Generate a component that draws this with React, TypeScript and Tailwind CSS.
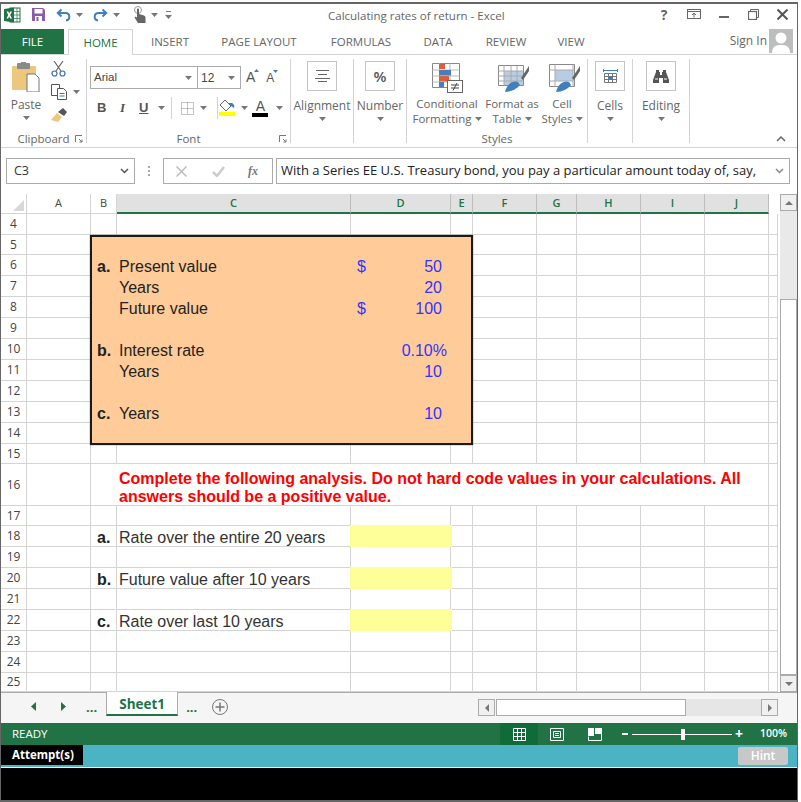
import type { ReactNode } from 'react';

const rowHeights = [21, 20, 21, 21, 21, 21, 21, 21, 21, 21, 21, 20, 42, 20, 21, 21, 21, 21, 21, 21, 21, 19];
const columns = ['A', 'B', 'C', 'D', 'E', 'F', 'G', 'H', 'I', 'J'];
const tabs = [
  { label: 'INSERT', width: 'w-[74px]' },
  { label: 'PAGE LAYOUT', width: 'w-[104px]' },
  { label: 'FORMULAS', width: 'w-[100px]' },
  { label: 'DATA', width: 'w-[54px]' },
  { label: 'REVIEW', width: 'w-[82px]' },
  { label: 'VIEW', width: 'w-[48px]' },
];

function Caret({ className = '' }: { className?: string }) {
  return (
    <svg width="7" height="4" viewBox="0 0 7 4" className={className}>
      <path d="M0 0h7L3.5 4z" fill="#777" />
    </svg>
  );
}

function Launcher() {
  return (
    <svg width="8" height="8" viewBox="0 0 8 8" fill="none" stroke="#777">
      <path d="M.5 7V.5H7M4 4l3 3M7 4.5V7H4.5" />
    </svg>
  );
}

function Group({ width, label, children, launcher }: { width: string; label: string; children: ReactNode; launcher?: boolean }) {
  return (
    <div className={`${width} h-[84px] mt-[4px] border-r border-[#d4d4d4] flex flex-col shrink-0`}>
      <div className="h-[73px] flex">{children}</div>
      <div className="h-[14px] -mb-[3px] flex items-center justify-center relative text-[11.5px] leading-[14px] text-[#666]">
        {label}
        {launcher && <span className="absolute right-[3px] top-[3px] flex"><Launcher /></span>}
      </div>
    </div>
  );
}

function BoxButton({ label, children }: { label: string; children: ReactNode }) {
  return (
    <div className="flex flex-1 flex-col items-center pt-[2px]">
      <div className="w-[30px] h-[30px] border border-[#c4c4c4] flex items-center justify-center">{children}</div>
      <div className="mt-[7px] text-[12px] leading-[16px] text-[#666] whitespace-nowrap">{label}</div>
      <Caret className="mt-[3px]" />
    </div>
  );
}

function StyleButton({ line1, line2, children, width }: { line1: string; line2: string; children: ReactNode; width: string }) {
  return (
    <div className={`${width} flex flex-col items-center shrink-0 pt-[3px]`}>
      <div className="h-[31px] flex items-center">{children}</div>
      <div className="mt-[3px] text-[11.5px] leading-[15px] text-[#666] text-center whitespace-nowrap">
        <div>{line1}</div>
        <div className="flex items-center justify-center gap-[3px]">{line2}<Caret /></div>
      </div>
    </div>
  );
}

function Cell({ col, row, span = 1, className = '', children }: { col: number; row: number; span?: number; className?: string; children?: ReactNode }) {
  return (
    <div
      className={`flex items-end ${className}`}
      style={{ gridColumn: `${col + 2} / span ${span}`, gridRow: row - 3 }}
    >
      {children}
    </div>
  );
}

function SheetGrid() {
  const labels: [number, string][] = [[6, 'Present value'], [7, 'Years'], [8, 'Future value'], [10, 'Interest rate'], [11, 'Years'], [13, 'Years']];
  const values: [number, string, string][] = [[6, '50', 'pr-[9px]'], [7, '20', 'pr-[9px]'], [8, '100', 'pr-[9px]'], [10, '0.10%', 'pr-[4px]'], [11, '10', 'pr-[9px]'], [13, '10', 'pr-[9px]']];
  const letters: [number, string][] = [[6, 'a.'], [10, 'b.'], [13, 'c.']];
  const tasks: [number, string, string][] = [[18, 'a.', 'Rate over the entire 20 years'], [20, 'b.', 'Future value after 10 years'], [22, 'c.', 'Rate over last 10 years']];
  return (
    <div className="grid grid-cols-[26px_64px_26px_234px_100px_22px_64px_40px_64px_64px_64px_9px] font-['Liberation_Sans',sans-serif] text-[16px] leading-[18px]"
      style={{ gridTemplateRows: rowHeights.map((h) => h + 'px').join(' ') }}>
      {rowHeights.map((_, i) => {
        const row = i + 4;
        return (
          <div key={'h' + row} className="flex items-center justify-center border-r border-b border-[#d4d4d4] text-[12px] text-[#444] font-['Open_Sans',sans-serif]"
            style={{ gridColumn: 1, gridRow: i + 1 }}>
            {row}
          </div>
        );
      })}
      {rowHeights.flatMap((_, i) =>
        Array.from({ length: 11 }, (_, c) => {
          const row = i + 4;
          if (row === 16 && c >= 2 && c <= 9) return null;
          if (row === 16 && c === 1) return <div key="merged" className="border-r border-b border-[#d4d4d4]" style={{ gridColumn: '3 / span 9', gridRow: i + 1 }} />;
          return <div key={row + '-' + c} className="border-r border-b border-[#d4d4d4]" style={{ gridColumn: c + 2, gridRow: i + 1 }} />;
        })
      )}
      <div className="col-start-3 col-end-7 row-start-2 row-end-12 -ml-[1px] -mb-[1px] bg-[#ffcc99] border-2 border-[#1a1a1a] shadow-[0_0_1px_#444]" />
      {letters.map(([row, text]) => (
        <Cell key={'l' + row} col={1} row={row} className="pl-[6px] font-bold text-[#222]">{text}</Cell>
      ))}
      {labels.map(([row, text]) => (
        <Cell key={'t' + row} col={2} row={row} className="pl-[2px] text-[#222]">{text}</Cell>
      ))}
      {[6, 8].map((row) => (
        <Cell key={'d' + row} col={3} row={row} className="pl-[6px] text-[#3333ff]">$</Cell>
      ))}
      {values.map(([row, text, pad]) => (
        <Cell key={'v' + row} col={3} row={row} className={`justify-end text-[#3333ff] ${pad}`}>{text}</Cell>
      ))}
      <Cell col={1} row={16} span={9} className="pl-[28px] font-bold text-[#ff0000]">
        <div>Complete the following analysis. Do not hard code values in your calculations. All answers should be a positive value.</div>
      </Cell>
      {tasks.map(([row, letter]) => (
        <Cell key={'a' + row} col={1} row={row} className="pl-[6px] font-bold text-[#222]">{letter}</Cell>
      ))}
      {tasks.map(([row, , text]) => (
        <Cell key={'b' + row} col={2} row={row} className="pl-[2px] text-[#333]">{text}</Cell>
      ))}
      {tasks.map(([row]) => (
        <Cell key={'y' + row} col={3} row={row} className="bg-[#ffff99] -mt-[1px] -mr-[1px] -ml-[1px]" />
      ))}
    </div>
  );
}

function ScrollButton({ dir }: { dir: 'up' | 'down' | 'left' | 'right' }) {
  const paths = { up: 'M1 7h8L5 3z', down: 'M1 3h8L5 7z', left: 'M7 1v8L3 5z', right: 'M3 1v8l4-4z' };
  return (
    <div className="w-[17px] h-[17px] shrink-0 bg-[#f0f0f0] border border-[#ababab] flex items-center justify-center">
      <svg width="10" height="10" viewBox="0 0 10 10"><path d={paths[dir]} fill="#777" /></svg>
    </div>
  );
}

export default function App() {
  return (
    <div className="w-[798px] h-[802px] pt-[2px] bg-white font-['Open_Sans',sans-serif] overflow-hidden">
      <div className="h-[800px] border-t-2 border-l border-r border-b-2 border-[#666] flex flex-col">
        {/* Title bar */}
        <div className="h-[25px] shrink-0 flex items-center relative pb-[4px]">
          <svg width="17" height="16" viewBox="0 0 17 16" className="ml-[3px]">
            <rect x="6" y="1" width="10" height="14" fill="#fff" stroke="#217346" />
            <path d="M9 1v14M13 1v14M6 4.5h10M6 8h10M6 11.5h10" stroke="#217346" strokeWidth=".7" />
            <path d="M0 2l10-1.5v15L0 14z" fill="#217346" />
            <path d="M2.5 4.5h1.8L5.2 6.6l1-2.1H8L6.2 8 8 11.5H6.1L5.2 9.3l-1 2.2H2.5L4.2 8z" fill="#fff" />
          </svg>
          <svg width="15" height="15" viewBox="0 0 15 15" className="ml-[10px]">
            <path d="M1 1h11l2 2v11H1z" fill="#8a5ca8" />
            <rect x="3.5" y="2" width="8" height="4.5" fill="#fff" />
            <rect x="4" y="9" width="7" height="5" fill="#fff" />
            <rect x="5.5" y="10" width="2" height="4" fill="#8a5ca8" />
          </svg>
          <svg width="16" height="14" viewBox="0 0 16 14" fill="none" className="ml-[10px]">
            <path d="M5.5 1.5 1.8 5l3.7 3.5" stroke="#3f7fbf" strokeWidth="2" />
            <path d="M2 5h7.5c5 0 5 7 .5 7.5" stroke="#3f7fbf" strokeWidth="2" />
          </svg>
          <Caret className="ml-[4px]" />
          <svg width="16" height="14" viewBox="0 0 16 14" fill="none" className="ml-[9px]">
            <path d="M10.5 1.5 14.2 5l-3.7 3.5" stroke="#3f7fbf" strokeWidth="2" />
            <path d="M14 5H6.5c-5 0-5 7-.5 7.5" stroke="#3f7fbf" strokeWidth="2" />
          </svg>
          <Caret className="ml-[5px]" />
          <svg width="14" height="18" viewBox="0 0 14 18" className="ml-[13px]">
            <circle cx="5" cy="4" r="3.5" fill="none" stroke="#9a9a9a" />
            <path d="M4 3.5c0-1.4 2-1.4 2 0V8l5 1.5c1.2.5 1.5 1.2 1.5 2.5V17H5L1.5 11.5l1-1L4 11.5z" fill="#666" />
          </svg>
          <Caret className="ml-[4px]" />
          <svg width="7" height="8" viewBox="0 0 7 8" className="ml-[7px]">
            <path d="M1 0h5v1H1zM0 4h7L3.5 8z" fill="#777" />
          </svg>
          <div className="absolute left-[327px] top-[3px] text-[11.5px] leading-[18px] text-[#666] whitespace-nowrap">Calculating rates of return - Excel</div>
          <div className="ml-auto flex items-center pr-[9px] text-[#666]">
            <span className="text-[14px] font-bold leading-[14px] w-[12px] text-center">?</span>
            <svg width="14" height="11" viewBox="0 0 14 11" fill="none" stroke="#666" className="ml-[17px]">
              <rect x=".5" y=".5" width="13" height="9" />
              <path d="M.5 2.5h13M7 8.5V4M5 6l2-2 2 2" />
            </svg>
            <div className="w-[10px] h-[2px] bg-[#666] ml-[18px] mt-[5px]" />
            <svg width="11" height="11" viewBox="0 0 11 11" fill="none" stroke="#666" className="ml-[19px]">
              <rect x=".5" y="2.5" width="8" height="8" strokeWidth="1.2" />
              <path d="M2.5 2.5v-2h8v8h-2" />
            </svg>
            <svg width="11" height="11" viewBox="0 0 11 11" stroke="#555" strokeWidth="2" className="ml-[18px]">
              <path d="M.5.5l10 10M10.5.5l-10 10" />
            </svg>
          </div>
        </div>

        {/* Tabs */}
        <div className="h-[26px] shrink-0 flex items-stretch border-b border-[#d4d4d4] text-[11.5px] text-[#666]">
          <div className="w-[63px] bg-[#217346] text-white flex items-center justify-center">FILE</div>
          <div className="w-[65px] ml-[4px] -mb-[1px] bg-white border border-b-0 border-[#d4d4d4] text-[#217346] flex items-center justify-center">HOME</div>
          {tabs.map((t) => (
            <div key={t.label} className={`${t.width} flex items-center justify-center whitespace-nowrap`}>{t.label}</div>
          ))}
          <div className="ml-auto flex items-center gap-[2px] pr-[4px] -mt-[2px] text-[12px]">
            <span>Sign In</span>
            <svg width="24" height="24" viewBox="0 0 24 24">
              <rect width="24" height="24" fill="#bdbdbd" />
              <circle cx="12" cy="9" r="5.5" fill="#fff" />
              <path d="M3 24c0-7 4-8 9-8s9 1 9 8z" fill="#fff" />
            </svg>
          </div>
        </div>

        {/* Ribbon */}
        <div className="h-[93px] shrink-0 flex border-b border-[#d4d4d4] relative">
          <Group width="w-[86px]" label="Clipboard" launcher>
            <div className="w-[47px] flex flex-col items-center pt-[3px] pl-[3px]">
              <svg width="28" height="30" viewBox="0 0 28 30">
                <rect y="4" width="24" height="24" rx="1" fill="#eec77e" />
                <rect x="5" y="1" width="13" height="6" rx="1" fill="#8a8a8a" />
                <rect x="9" width="5" height="3" fill="#8a8a8a" />
                <path d="M15 12h8l4 4v14H15z" fill="#fff" stroke="#777" />
              </svg>
              <div className="mt-[5px] text-[12px] leading-[16px] text-[#666]">Paste</div>
              <Caret className="mt-[3px]" />
            </div>
            <div className="flex flex-col pl-[3px] pt-[2px]">
              <svg width="15" height="16" viewBox="0 0 15 16" fill="none" stroke="#3f6fa8" strokeWidth="1.2">
                <path d="M3 0l7 10M12 0L5 10" stroke="#666" />
                <circle cx="3.5" cy="12.5" r="2.5" />
                <circle cx="11.5" cy="12.5" r="2.5" />
              </svg>
              <div className="flex items-center gap-[5px] mt-[7px]">
                <svg width="17" height="16" viewBox="0 0 17 16" fill="#fff" stroke="#555">
                  <path d="M.5.5h8v11h-8z" />
                  <path d="M6.5 4.5h6l3 3v8h-9z" />
                  <path d="M8.5 9.5h5M8.5 12h5" stroke="#3f6fa8" />
                </svg>
                <Caret />
              </div>
              <svg width="16" height="14" viewBox="0 0 16 14" className="mt-[8px]">
                <path d="M0 12l6-7 5 4-4 5z" fill="#eec77e" />
                <path d="M7 4l5-4 4 4-3 4z" fill="#555" />
              </svg>
            </div>
          </Group>

          <Group width="w-[204px]" label="Font" launcher>
            <div className="flex flex-col pl-[3px] pt-[7px] font-['Liberation_Sans',sans-serif]">
              <div className="flex items-center h-[23px]">
                <div className="w-[108px] h-[23px] border border-[#ababab] flex items-center justify-between px-[3px] text-[11.5px] text-[#444]">
                  Arial <Caret className="mr-[2px]" />
                </div>
                <div className="w-[43px] h-[23px] border border-l-0 border-[#ababab] flex items-center justify-between px-[3px] text-[12px] text-[#444]">
                  12 <Caret className="mr-[2px]" />
                </div>
                <span className="ml-[5px] text-[14px] text-[#555] relative">A<svg width="5" height="3" viewBox="0 0 5 3" className="absolute -right-[4px] top-[2px]"><path d="M0 3h5L2.5 0z" fill="#3f7fbf" /></svg></span>
                <span className="ml-[11px] text-[12px] text-[#555] relative">A<svg width="5" height="3" viewBox="0 0 5 3" className="absolute -right-[4px] top-[1px]"><path d="M0 0h5L2.5 3z" fill="#3f7fbf" /></svg></span>
              </div>
              <div className="flex items-center h-[26px] mt-[6px] text-[13px] text-[#555]">
                <span className="ml-[7px] font-bold w-[23px]">B</span>
                <span className="italic font-['Liberation_Serif',serif] font-bold w-[19px]">I</span>
                <span className="underline font-bold">U</span>
                <Caret className="ml-[10px]" />
                <div className="w-px h-[22px] bg-[#d4d4d4] ml-[6px]" />
                <svg width="13" height="13" viewBox="0 0 13 13" fill="none" stroke="#888" strokeDasharray="1 1" className="ml-[9px]">
                  <path d="M.5.5h12v12H.5zM6.5.5v12M.5 6.5h12" />
                </svg>
                <Caret className="ml-[6px]" />
                <div className="w-px h-[22px] bg-[#d4d4d4] ml-[10px]" />
                <div className="flex flex-col items-center ml-[1px] w-[16px]">
                  <svg width="16" height="12" viewBox="0 0 16 12" fill="none">
                    <path d="M6 0l6 6-5 5-6-6z" stroke="#666" />
                    <path d="M9 3h3c2 0 4 2 3 5l-3-2z" fill="#3f7fbf" />
                  </svg>
                  <div className="w-[16px] h-[4px] bg-[#ffff00]" />
                </div>
                <Caret className="ml-[6px]" />
                <div className="flex flex-col items-center ml-[4px] w-[16px] leading-[12px]">
                  <span className="text-[14px] text-[#555] h-[13px]">A</span>
                  <div className="w-[16px] h-[4px] bg-black" />
                </div>
                <Caret className="ml-[8px]" />
              </div>
            </div>
          </Group>

          <Group width="w-[63px]" label="">
            <BoxButton label="Alignment">
              <svg width="15" height="12" viewBox="0 0 15 12" stroke="#666"><path d="M1 .5h13M3 4.5h9M0 8.5h15M3 11.5h9" /></svg>
            </BoxButton>
          </Group>
          <Group width="w-[53px]" label="">
            <BoxButton label="Number">
              <span className="text-[15px] font-semibold text-[#555]">%</span>
            </BoxButton>
          </Group>

          <Group width="w-[181px]" label="Styles">
            <div className="flex">
              <StyleButton width="w-[80px]" line1="Conditional" line2="Formatting">
                <svg width="31" height="30" viewBox="0 0 31 30">
                  <path d="M.5.5h27v24H.5z" fill="#fff" stroke="#888" />
                  <path d="M7.5.5v24M.5 7h27M.5 13h27M.5 19h27M18 .5v24" stroke="#bbb" fill="none" />
                  <rect x="7" y="1" width="6" height="5" fill="#d9603c" />
                  <rect x="7" y="7" width="12" height="5.5" fill="#4a7ebb" />
                  <rect x="7" y="13" width="10" height="5.5" fill="#d9603c" />
                  <rect x="7" y="19" width="5" height="5.5" fill="#4a7ebb" />
                  <rect x="15.5" y="17.5" width="15" height="12" fill="#fff" stroke="#666" />
                  <path d="M19 22h8M19 25h8M25 20l-4 7.5" stroke="#444" fill="none" />
                </svg>
              </StyleButton>
              <StyleButton width="w-[50px]" line1="Format as" line2="Table">
                <svg width="32" height="30" viewBox="0 0 32 30" className="ml-[4px]">
                  <path d="M.5 2.5h25v20H.5z" fill="#fff" stroke="#888" />
                  <rect x="6" y="8" width="19" height="14" fill="#b8cde4" />
                  <path d="M6 2.5v20M13 2.5v20M19 2.5v20M.5 8h25M.5 13h25M.5 18h25" stroke="#aaa" fill="none" />
                  <path d="M31 3l-8 12 2 2L31 8z" fill="#666" />
                  <path d="M7 29c2-8 8-12 13-10l2 3c-3 4-9 7-15 7z" fill="#3f7fbf" />
                </svg>
              </StyleButton>
              <StyleButton width="w-[50px]" line1="Cell" line2="Styles">
                <svg width="32" height="30" viewBox="0 0 32 30" className="ml-[6px]">
                  <path d="M.5 1.5h25v22H.5z" fill="#fff" stroke="#888" />
                  <rect x="6" y="7" width="18" height="11" fill="#b8cde4" />
                  <path d="M6 1.5v22M.5 7h25M.5 18h25M24 1.5v22" stroke="#aaa" fill="none" />
                  <path d="M31 3l-8 12 2 2L31 8z" fill="#666" />
                  <path d="M7 29c2-8 8-12 13-10l2 3c-3 4-9 7-15 7z" fill="#3f7fbf" />
                </svg>
              </StyleButton>
            </div>
          </Group>

          <Group width="w-[45px]" label="">
            <BoxButton label="Cells">
              <svg width="15" height="15" viewBox="0 0 15 15" fill="none">
                <path d="M.5 1.5h14M.5 0v3M14.5 0v3" stroke="#3f7fbf" />
                <path d="M1.5 4.5h12v9h-12zM1.5 7.5h12M1.5 10.5h12M5.5 4.5v9M9.5 4.5v9" stroke="#777" />
                <rect x="5.5" y="7.5" width="4" height="3" fill="#3f7fbf" />
              </svg>
            </BoxButton>
          </Group>
          <Group width="w-[57px]" label="">
            <BoxButton label="Editing">
              <svg width="16" height="13" viewBox="0 0 16 13" fill="#555">
                <path d="M3 0h3v2h1v3h2V2h1V0h3v2l3 8v3h-6V8H6v5H0v-3l3-8z" />
                <path d="M2 9h3M11 9h3" stroke="#fff" strokeWidth="1" />
              </svg>
            </BoxButton>
          </Group>

          <svg width="10" height="6" viewBox="0 0 10 6" fill="none" stroke="#666" strokeWidth="1.5" className="absolute right-[11px] bottom-[5px]">
            <path d="M1 5l4-4 4 4" />
          </svg>
        </div>

        {/* Formula bar */}
        <div className="h-[26px] mt-[10px] shrink-0 flex items-stretch">
          <div className="w-[129px] ml-[5px] border border-[#ababab] flex items-center justify-between pl-[7px] pr-[5px] text-[12.5px] text-[#333]">
            C3
            <svg width="9" height="6" viewBox="0 0 9 6" fill="none" stroke="#555" strokeWidth="1.5"><path d="M1 1l3.5 3.5L8 1" /></svg>
          </div>
          <div className="w-[28px] flex flex-col items-center justify-center gap-[2px]">
            <i className="w-[2px] h-[2px] bg-[#aaa]" /><i className="w-[2px] h-[2px] bg-[#aaa]" /><i className="w-[2px] h-[2px] bg-[#aaa]" />
          </div>
          <div className="w-[110px] border border-[#ababab] flex items-center">
            <svg width="11" height="11" viewBox="0 0 11 11" stroke="#bbb" strokeWidth="1.5" className="ml-[12px]"><path d="M.5.5l10 10M10.5.5l-10 10" /></svg>
            <svg width="13" height="11" viewBox="0 0 13 11" fill="none" stroke="#ccc" strokeWidth="2.5" className="ml-[25px]"><path d="M1 6l4 4 7-9" /></svg>
            <span className="ml-[23px] font-['Liberation_Serif',serif] italic font-bold text-[12px] text-[#777]">fx</span>
          </div>
          <div className="w-[514px] ml-[3px] border border-[#ababab] flex items-center justify-between pl-[4px] pr-[5px] text-[13px] text-[#222]">
            <span className="whitespace-nowrap">With a Series EE U.S. Treasury bond, you pay a particular amount today of, say,</span>
            <svg width="9" height="6" viewBox="0 0 9 6" fill="none" stroke="#888" strokeWidth="1.5"><path d="M1 1l3.5 3.5L8 1" /></svg>
          </div>
        </div>

        {/* Sheet */}
        <div className="mt-[10px] h-[499px] shrink-0 flex border-b border-[#ababab]">
          <div className="w-[778px] shrink-0 flex flex-col">
            <div className="h-[20px] shrink-0 grid grid-cols-[26px_64px_26px_234px_100px_22px_64px_40px_64px_64px_64px] text-[11px]">
              <div className="border-r border-b border-[#d4d4d4] flex items-end justify-end p-[2px]">
                <svg width="11" height="11" viewBox="0 0 11 11"><path d="M11 0v11H0z" fill="#d8d8d8" /></svg>
              </div>
              {columns.map((c, i) => (
                <div
                  key={c}
                  className={i < 2
                    ? 'flex items-center justify-center border-r border-b border-[#d4d4d4] text-[#444]'
                    : 'flex items-center justify-center border-r border-[#bdbdbd] bg-[#e1e1e1] border-b-2 border-b-[#217346] text-[#217346] font-semibold'}
                >
                  {c}
                </div>
              ))}
            </div>
            <SheetGrid />
          </div>
          <div className="w-[17px] ml-[1px] shrink-0 flex flex-col bg-[#e9e9e9]">
            <ScrollButton dir="up" />
            <div className="h-[88px] shrink-0" />
            <div className="h-[376px] shrink-0 bg-white border border-[#ababab]" />
            <div className="flex-1" />
            <ScrollButton dir="down" />
          </div>
        </div>

        {/* Sheet tabs */}
        <div className="h-[30px] shrink-0 bg-[#f5f5f5] flex items-start">
          <svg width="7" height="9" viewBox="0 0 7 9" className="ml-[29px] mt-[9px]"><path d="M6 0v9L1 4.5z" fill="#217346" /></svg>
          <svg width="7" height="9" viewBox="0 0 7 9" className="ml-[23px] mt-[9px]"><path d="M1 0v9l5-4.5z" fill="#217346" /></svg>
          <span className="ml-[19px] mt-[6px] text-[13px] font-bold leading-[16px] text-[#217346]">...</span>
          <div className="ml-[9px] -mt-[1px] w-[72px] h-[24px] pt-[3px] bg-white border-x border-[#ababab] border-b-2 border-b-[#217346] flex items-center justify-center text-[13.5px] font-bold text-[#217346]">Sheet1</div>
          <span className="ml-[8px] mt-[6px] text-[13px] font-bold leading-[16px] text-[#217346]">...</span>
          <svg width="16" height="16" viewBox="0 0 16 16" fill="none" stroke="#777" className="ml-[15px] mt-[6px]">
            <circle cx="8" cy="8" r="7.5" />
            <path d="M8 3.5v9M3.5 8h9" strokeWidth="1.5" />
          </svg>
          <div className="ml-[250px] mt-[6px] flex">
            <ScrollButton dir="left" />
            <div className="w-[190px] h-[17px] ml-[1px] bg-white border border-[#ababab]" />
            <div className="w-[75px] h-[17px] bg-[#e6e6e6]" />
            <ScrollButton dir="right" />
          </div>
        </div>

        {/* Status bar */}
        <div className="h-[22px] shrink-0 bg-[#217346] flex items-center text-white text-[10.5px]">
          <span className="w-[499px] pl-[11px] text-[11.5px] shrink-0">READY</span>
          <div className="w-[38px] h-full bg-[#0f6b37] flex items-center justify-center">
            <svg width="13" height="13" viewBox="0 0 13 13" fill="none" stroke="#fff"><path d="M.5.5h12v12H.5zM4.5.5v12M8.5.5v12M.5 4.5h12M.5 8.5h12" /></svg>
          </div>
          <svg width="14" height="13" viewBox="0 0 14 13" fill="none" stroke="#fff" className="ml-[12px]"><path d="M.5.5h13v12H.5zM3.5 3.5h7v6h-7zM5 5.5h4M5 7.5h4" /></svg>
          <svg width="14" height="13" viewBox="0 0 14 13" className="ml-[24px]"><path d="M.5 8.5v4h13v-12" fill="none" stroke="#fff" /><rect width="6" height="8" fill="#fff" /><rect x="7" width="7" height="6" fill="#fff" /></svg>
          <div className="w-[6px] h-[2px] bg-white ml-[20px]" />
          <div className="w-[100px] h-px bg-white ml-[4px] relative">
            <div className="absolute left-[49px] -top-[5px] w-[4px] h-[11px] bg-white" />
          </div>
          <span className="ml-[3px] text-[14px] font-bold leading-none">+</span>
          <span className="ml-auto mr-[10px] font-semibold">100%</span>
        </div>

        {/* Attempts */}
        <div className="h-[22px] shrink-0 bg-[#4bb3c3] flex items-start justify-between">
          <div className="w-[82px] h-[20px] bg-black text-white text-[11.5px] font-bold flex items-center pl-[11px] whitespace-nowrap">Attempt(s)</div>
          <div className="w-[50px] h-[18px] mt-[2px] mr-[9px] bg-[#c8c8c8] rounded-[2px] text-white text-[12px] font-semibold flex items-center justify-center">Hint</div>
        </div>
        <div className="flex-1 bg-black border-t border-white" />
      </div>
    </div>
  );
}
